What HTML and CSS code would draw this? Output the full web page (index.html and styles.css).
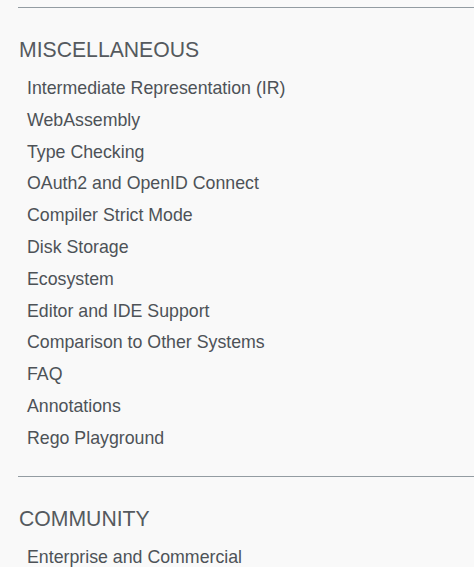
FILE: index.html
```html
<!DOCTYPE html>
<html>
<head>
<meta charset="utf-8">
<link rel="stylesheet" href="styles.css">
</head>
<body>
<div class="sidebar">
  <section class="group">
    <h2 class="group-title">MISCELLANEOUS</h2>
    <ul class="links">
      <li>Intermediate Representation (IR)</li>
      <li>WebAssembly</li>
      <li>Type Checking</li>
      <li>OAuth2 and OpenID Connect</li>
      <li>Compiler Strict Mode</li>
      <li>Disk Storage</li>
      <li>Ecosystem</li>
      <li>Editor and IDE Support</li>
      <li>Comparison to Other Systems</li>
      <li>FAQ</li>
      <li>Annotations</li>
      <li>Rego Playground</li>
    </ul>
  </section>
  <section class="group">
    <h2 class="group-title">COMMUNITY</h2>
    <ul class="links">
      <li>Enterprise and Commercial</li>
    </ul>
  </section>
</div>
</body>
</html>
```
FILE: styles.css
```css
html, body {
  margin: 0;
  padding: 0;
  background: #f9f9f9;
}
.sidebar {
  padding: 7px 0 0 18px;
  font-family: "Liberation Sans", Arial, sans-serif;
}
.group {
  border-top: 1px solid #939ca2;
  padding-top: 30px;
  padding-bottom: 21px;
}
.group-title {
  margin: 0;
  padding-left: 1px;
  font-size: 21.2px;
  line-height: 24px;
  font-weight: normal;
  color: #555a5e;
}
.links {
  list-style: none;
  margin: 11px 0 0 0;
  padding: 0 0 0 9px;
}
.links li {
  font-size: 17.75px;
  line-height: 31.8px;
  color: #4d5257;
}
```
